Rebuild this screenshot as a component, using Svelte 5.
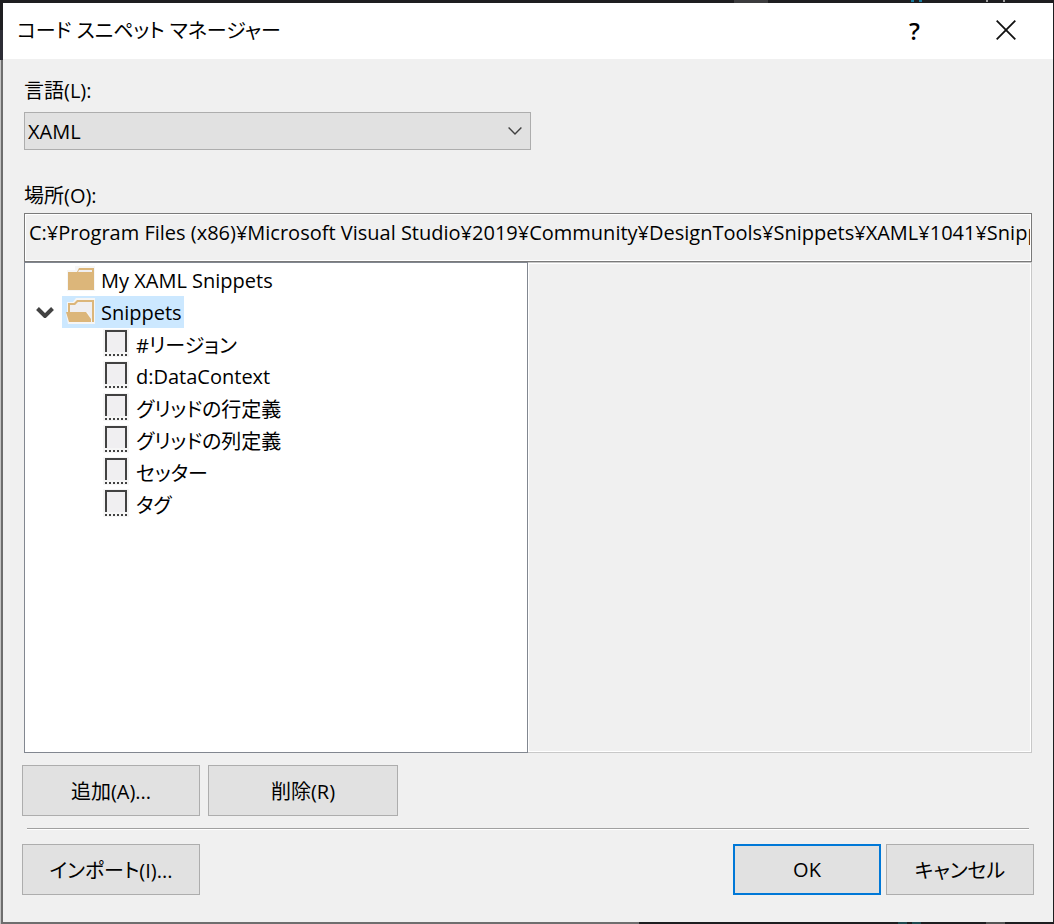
<script lang="ts">
  type Snippet = { id: string; label: string };

  const languages = ['XAML', 'CSS', 'HTML', 'JavaScript', 'SQL'];
  const folderPath =
    'C:¥Program Files (x86)¥Microsoft Visual Studio¥2019¥Community¥DesignTools¥Snippets¥XAML¥1041¥Snippets';

  const snippets: Snippet[] = [
    { id: 'region', label: '#リージョン' },
    { id: 'datacontext', label: 'd:DataContext' },
    { id: 'rowdef', label: 'グリッドの行定義' },
    { id: 'coldef', label: 'グリッドの列定義' },
    { id: 'setter', label: 'セッター' },
    { id: 'tag', label: 'タグ' },
  ];

  let language = $state('XAML');
  let selected = $state('snippets');
  let expanded = $state(true);
</script>

<div class="window">
  <header class="titlebar">
    <h1>コード スニペット マネージャー</h1>
    <button class="caption help" type="button" aria-label="ヘルプ">?</button>
    <button class="caption" type="button" aria-label="閉じる">
      <svg width="20" height="20" viewBox="0 0 20 20" aria-hidden="true">
        <path d="M.7.7 19.3 19.3M19.3.7.7 19.3" fill="none" stroke="#111" stroke-width="1.8" />
      </svg>
    </button>
  </header>

  <main>
    <label for="language">言語(L):</label>
    <div class="select">
      <select id="language" bind:value={language}>
        {#each languages as lang}
          <option value={lang}>{lang}</option>
        {/each}
      </select>
      <svg class="arrow" width="14" height="8" viewBox="0 0 14 8" aria-hidden="true">
        <path d="M.6.6 7 7 13.4.6" fill="none" stroke="#404040" stroke-width="1.4" />
      </svg>
    </div>

    <label class="location" for="location">場所(O):</label>
    <input id="location" type="text" readonly value={folderPath} />

    <div class="panes">
      <ul class="tree" role="tree" aria-label="スニペット">
        <li role="treeitem" aria-selected={selected === 'my'}>
          <div class="row">
            <button class="node" class:selected={selected === 'my'} type="button" onclick={() => (selected = 'my')}>
              <svg width="30" height="28" viewBox="0 0 30 28" aria-hidden="true">
                <path d="M1 4h8V0h20v25H1z" fill="#f6f6f6" />
                <path d="M2 6h9l2-4h15v22H2z" fill="#dcb67a" />
                <path d="M13 4h13v2H12z" fill="#f0eff1" />
              </svg>
              <span>My XAML Snippets</span>
            </button>
          </div>
        </li>
        <li role="treeitem" aria-expanded={expanded} aria-selected={selected === 'snippets'}>
          <div class="row">
            <button class="toggle" type="button" aria-label="展開" onclick={() => (expanded = !expanded)}>
              <svg class:closed={!expanded} width="18" height="12" viewBox="0 0 18 12" aria-hidden="true">
                <path d="M1.5 2.5 9 10l7.5-7.5" fill="none" stroke="#424242" stroke-width="4" />
              </svg>
            </button>
            <button class="node" class:selected={selected === 'snippets'} type="button" onclick={() => (selected = 'snippets')}>
              <svg width="30" height="28" viewBox="0 0 30 28" aria-hidden="true">
                <path d="M1 4h6l3-4h19v26H2L0 16h1z" fill="#f6f6f6" />
                <path d="M4 14V6h6l3-3h13v19l-4-8z" fill="#f0eff1" />
                <path d="M2 14V5h6l3-3h17v22h-2V4H12l-3 3H4v7z" fill="#dcb67a" />
                <path d="M0 14h20l5 7v3H3z" fill="#dcb67a" />
              </svg>
              <span>Snippets</span>
            </button>
          </div>
          {#if expanded}
            <ul role="group">
              {#each snippets as item (item.id)}
                <li role="treeitem" aria-selected={selected === item.id}>
                  <div class="row child">
                    <button class="node" class:selected={selected === item.id} type="button" onclick={() => (selected = item.id)}>
                      <svg width="26" height="32" viewBox="0 0 26 32" aria-hidden="true">
                        <path d="M0 1h26v28H0z" fill="#f6f6f6" />
                        <path d="M4 4h18v20H4z" fill="#f0eff1" />
                        <path d="M3 24V3h20v21" fill="none" stroke="#424242" stroke-width="2" />
                        <path d="M2 27h22" stroke="#424242" stroke-width="2" stroke-dasharray="2 2" />
                      </svg>
                      <span>{item.label}</span>
                    </button>
                  </div>
                </li>
              {/each}
            </ul>
          {/if}
        </li>
      </ul>
      <div class="details"></div>
    </div>

    <div class="actions">
      <button class="push add" type="button">追加(A)...</button>
      <button class="push remove" type="button">削除(R)</button>
    </div>

    <hr />

    <footer class="actions">
      <button class="push add" type="button">インポート(I)...</button>
      <div class="confirm">
        <button class="push default" type="button">OK</button>
        <button class="push" type="button">キャンセル</button>
      </div>
    </footer>
  </main>
</div>

<style>
  :global(body) {
    margin: 0;
    background: #1e1e20;
  }
  .window,
  .window button,
  .window input,
  .window select {
    font-family: 'Open Sans', 'Noto Sans CJK JP', sans-serif;
    font-size: 20px;
    font-feature-settings: 'palt';
    color: #000;
  }
  /* the padding is the window frame, with the desktop showing through it */
  .window {
    box-sizing: border-box;
    min-height: 100vh;
    display: flex;
    flex-direction: column;
    padding: 3px 1px 2px 3px;
    background:
      linear-gradient(90deg, transparent 911px, #1b7a9c 911px 914px, transparent 914px 919px, #1b7a9c 919px 922px, transparent 922px 986px, #a0a0a0 986px 988px, transparent 988px 1003px, #a0a0a0 1003px 1005px, transparent 1005px) 0 0 / 100% 2px no-repeat,
      linear-gradient(90deg, transparent 734px, #3c3c3e 734px 768px, transparent 768px) 0 0 / 100% 3px no-repeat,
      linear-gradient(#1e1e20 30px, #2d2d35 30px 60px, transparent 60px) 0 0 / 3px 100% no-repeat,
      linear-gradient(90deg, #c4c4c4 1px, #6e6e6e 1px) 0 0 / 3px 100% no-repeat,
      linear-gradient(90deg, #6e6e6e 639px, #1e1e20 639px 898px, #1f4a50 898px 907px, #1e1e20 907px 912px, #1f4a50 912px 921px, #1e1e20 921px 986px, #555 986px 1005px, #1e1e20 1005px) 0 100% / 100% 2px no-repeat,
      #1e1e20;
  }
  .titlebar {
    display: flex;
    height: 56px;
    padding: 0 2px 0 14px;
    background: #fff;
  }
  h1 {
    flex: 1;
    margin: 0;
    font-size: 20px;
    font-weight: 400;
    line-height: 56px;
  }
  button {
    padding: 0;
    border: 0;
    background: none;
  }
  .caption {
    display: flex;
    align-items: center;
    justify-content: center;
    width: 91px;
    height: 54px;
  }
  .window .help {
    font-size: 24px;
    font-weight: 600;
  }
  main {
    flex: 1;
    display: flex;
    flex-direction: column;
    padding: 18px 21px 27px;
    background: #f0f0f0;
  }
  label {
    line-height: 28px;
  }
  .select {
    position: relative;
    width: calc(50% + 3px);
    margin-top: 7px;
  }
  select {
    appearance: none;
    display: block;
    width: 100%;
    height: 38px;
    padding: 0 28px 0 3px;
    border: 1px solid #adadad;
    border-radius: 0;
    background: #e1e1e1;
  }
  .arrow {
    position: absolute;
    right: 9px;
    top: 15px;
    pointer-events: none;
  }
  .location {
    margin-top: 32px;
  }
  input {
    box-sizing: border-box;
    width: 100%;
    height: 49px;
    margin-top: 3px;
    padding: 0 1px 10px 4px;
    border: 1px solid #7a7a7a;
    border-radius: 0;
    background: #f0f0f0;
    box-shadow: inset 0 0 0 1px #fff;
    outline: none;
  }
  .panes {
    flex: 1;
    display: grid;
    grid-template-columns: 1fr 1fr;
  }
  .tree {
    border: 1px solid #828790;
    padding-top: 1px;
    background: #fff;
  }
  ul {
    margin: 0;
    padding: 0;
    list-style: none;
  }
  .row {
    display: flex;
    height: 32px;
    padding-left: 37px;
  }
  .row.child {
    padding-left: 74px;
  }
  .toggle {
    display: flex;
    align-items: center;
    width: 26px;
    margin-left: -26px;
  }
  .closed {
    transform: rotate(-90deg);
  }
  .node {
    display: flex;
    align-items: center;
    gap: 5px;
    padding: 0 2px 0 4px;
    white-space: nowrap;
  }
  .child .node {
    gap: 7px;
  }
  .selected {
    background: #cce8ff;
  }
  .details {
    border: 1px solid #c8c8c8;
    border-left: 0;
    box-shadow: inset -1px -1px #fff, inset 1px 1px #fff;
  }
  .actions {
    display: flex;
    gap: 8px;
    margin: 12px -2px 0;
  }
  .push {
    box-sizing: border-box;
    width: 148px;
    height: 51px;
    border: 1px solid #adadad;
    background: #e1e1e1;
  }
  .add {
    width: 178px;
  }
  .remove {
    width: 190px;
  }
  .default {
    border: 2px solid #0078d7;
  }
  hr {
    width: calc(100% - 6px);
    margin: 12px auto 2px;
    border: 0;
    border-top: 1px solid #a0a0a0;
    border-bottom: 1px solid #fff;
  }
  .confirm {
    display: flex;
    gap: 5px;
    margin-left: auto;
  }
</style>
